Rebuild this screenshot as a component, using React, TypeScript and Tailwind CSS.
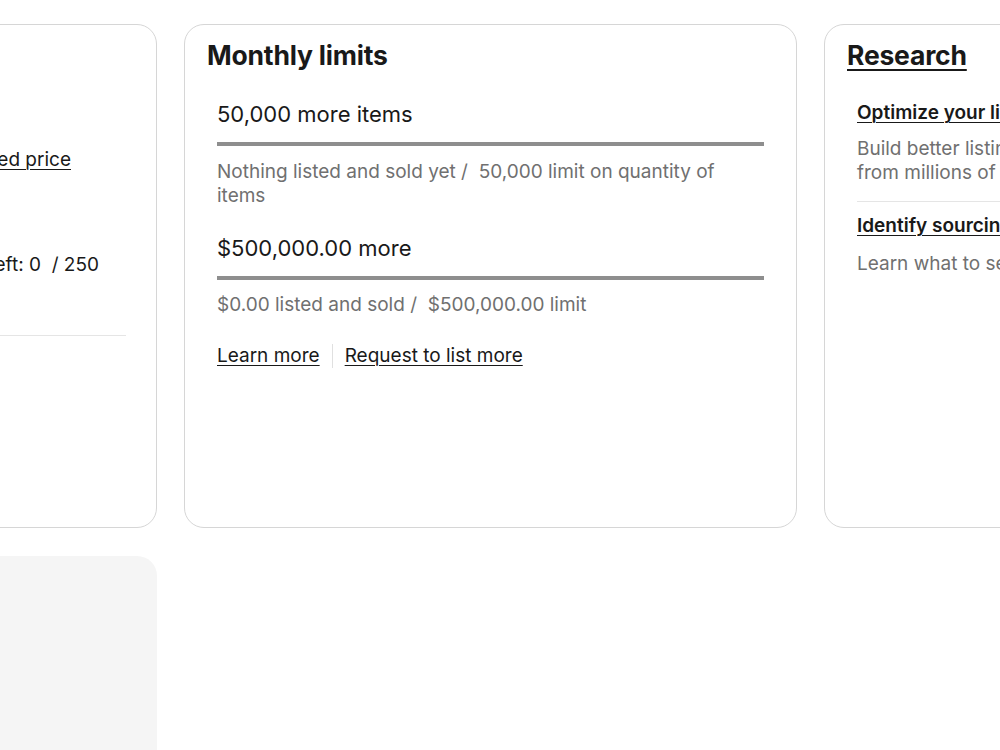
import React from "react";

const font = { fontFamily: "Inter, 'Noto Sans', sans-serif" };

export default function App() {
  return (
    <div
      className="w-[1000px] h-[750px] overflow-hidden bg-white text-[#191919]"
      style={font}
    >
      <div className="flex flex-row gap-[27px] pt-[24px] ml-[-143px] w-[1500px]">
        {/* Left column */}
        <div className="flex flex-col gap-[28px] w-[300px] shrink-0">
          <div className="h-[504px] rounded-[20px] border border-[#d6d6d6] bg-white px-[22px]">
            <div className="mt-[123px] w-[191px] text-right text-[19px] leading-[24px]">
              <a className="underline underline-offset-[3px] decoration-1">
                See suggested price
              </a>
            </div>
            <div className="mt-[81px] w-[219px] text-right text-[19px] leading-[24px] whitespace-nowrap">
              Listings left: 0&nbsp; / 250
            </div>
            <div className="mt-[58px] mr-[8px] h-px bg-[#e5e5e5]" />
          </div>
          <div className="h-[260px] rounded-[20px] bg-[#f5f5f5]" />
        </div>

        {/* Monthly limits */}
        <div className="w-[613px] h-[504px] shrink-0 rounded-[20px] border border-[#d6d6d6] bg-white px-[22px] pt-[13px]">
          <h2 className="text-[26.5px] leading-[34px] font-bold tracking-[-0.2px]">
            Monthly limits
          </h2>
          <div className="px-[10px]">
            <div className="mt-[28px] text-[22px] leading-[28px]">
              50,000 more items
            </div>
            <div className="mt-[14px] h-[4px] bg-[#8e8e8e]" />
            <div className="mt-[14px] text-[19px] leading-[24px] text-[#707070] pr-[40px]">
              Nothing listed and sold yet /&nbsp; 50,000 limit on quantity of items
            </div>
            <div className="mt-[26px] text-[22px] leading-[28px]">
              $500,000.00 more
            </div>
            <div className="mt-[14px] h-[4px] bg-[#8e8e8e]" />
            <div className="mt-[13px] text-[19px] leading-[24px] text-[#707070]">
              $0.00 listed and sold /&nbsp; $500,000.00 limit
            </div>
            <div className="mt-[27px] flex items-center text-[19px] leading-[24px]">
              <a className="underline underline-offset-[3px] decoration-1">
                Learn more
              </a>
              <span className="mx-[12px] w-px h-[24px] bg-[#e0e0e0]" />
              <a className="underline underline-offset-[3px] decoration-1">
                Request to list more
              </a>
            </div>
          </div>
        </div>

        {/* Research */}
        <div className="w-[400px] h-[504px] shrink-0 rounded-[20px] border border-[#d6d6d6] bg-white px-[22px] pt-[13px]">
          <h2 className="text-[26.5px] leading-[34px] font-bold tracking-[-0.2px]">
            <a className="underline underline-offset-[4px] decoration-2">Research</a>
          </h2>
          <div className="px-[10px]">
            <div className="mt-[29px] text-[19px] leading-[24px] font-semibold whitespace-nowrap">
              <a className="underline underline-offset-[3px] decoration-1">
                Optimize your listings
              </a>
            </div>
            <div className="mt-[12px] text-[19px] leading-[24px] text-[#707070] whitespace-nowrap">
              Build better listings with data
              <br />
              from millions of eBay sales
            </div>
            <div className="mt-[16px] h-px bg-[#e5e5e5]" />
            <div className="mt-[12px] text-[19px] leading-[24px] font-semibold whitespace-nowrap">
              <a className="underline underline-offset-[3px] decoration-1">
                Identify sourcing opportunities
              </a>
            </div>
            <div className="mt-[14px] text-[19px] leading-[24px] text-[#707070] whitespace-nowrap">
              Learn what to sell next
            </div>
          </div>
        </div>
      </div>
    </div>
  );
}
